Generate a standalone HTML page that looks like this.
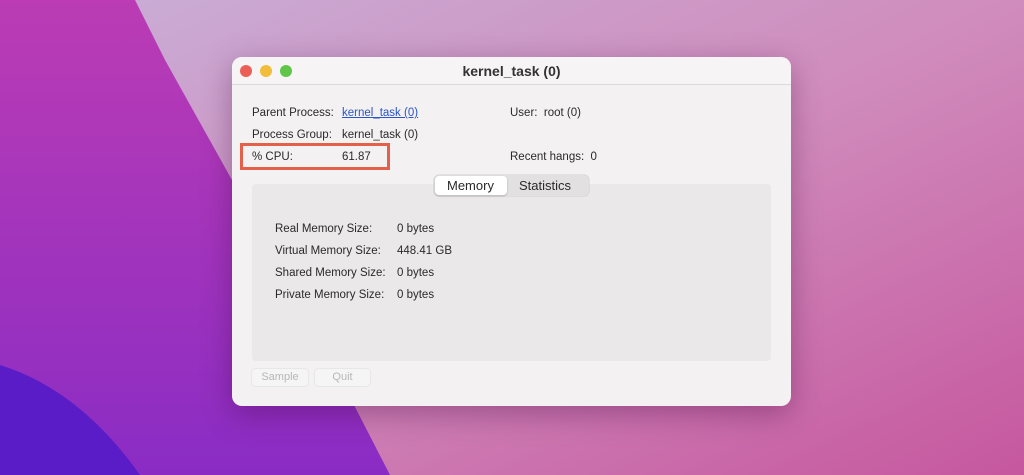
<!DOCTYPE html>
<html><head><style>
body{margin:0;width:1024px;height:475px;overflow:hidden;position:relative;font-family:"Liberation Sans",sans-serif;}
svg.bg{position:absolute;left:0;top:0}
.win{position:absolute;left:232px;top:57px;width:559px;height:349px;background:#f3f1f1;border-radius:10px;box-shadow:0 8px 30px rgba(60,0,60,.35);overflow:hidden}
.tb{height:27px;border-bottom:1px solid #dcdada;background:#f6f4f4;position:relative}
.dot{position:absolute;top:8px;width:12px;height:12px;border-radius:50%}
.title{position:absolute;left:0;right:0;top:6px;text-align:center;font-size:14px;font-weight:bold;color:#333}
.t{position:absolute;font-size:11.5px;color:#2a2a2a;white-space:nowrap}
a{color:#2a55c8;text-decoration:underline}
.box{position:absolute;left:8px;top:86px;width:150px;height:27px;border:3px solid #e5604a;box-sizing:border-box}
.grp{position:absolute;left:20px;top:127px;width:519px;height:177px;background:#eae8e8;border-radius:4px}
.tabs{position:absolute;left:202px;top:118px;width:155px;height:21px;background:#e2e0e0;border-radius:5px;box-shadow:0 0 0 .5px #d0cece}
.tab1{position:absolute;left:1px;top:1px;width:72px;height:19px;background:#fff;border-radius:4px;box-shadow:0 1px 2px rgba(0,0,0,.2)}
.btn{position:absolute;top:312px;height:17px;background:#f6f5f5;border-radius:3px;box-shadow:0 0 0 .5px #ddd;font-size:11px;color:#b8b6b6;text-align:center;line-height:17px}
</style></head><body>
<svg class="bg" width="1024" height="475">
<defs>
<linearGradient id="g1" x1="0" y1="0" x2="1" y2="1"><stop offset="0" stop-color="#c8b0d8"/><stop offset=".5" stop-color="#d08cbc"/><stop offset="1" stop-color="#c6579f"/></linearGradient>
<linearGradient id="g2" x1="0" y1="0" x2="0" y2="1"><stop offset="0" stop-color="#bb3cb4"/><stop offset="1" stop-color="#8a2cc4"/></linearGradient>
</defs>
<rect width="1024" height="475" fill="url(#g1)"/>
<path d="M0 0 L135 0 L165 60 L232 180 L300 300 L390 475 L0 475Z" fill="url(#g2)"/>
<path d="M0 365 Q80 390 140 475 L0 475Z" fill="#5a1cc6"/>
</svg>
<div class="win">
<div class="tb">
<div class="dot" style="left:8px;background:#ec5f56"></div>
<div class="dot" style="left:28px;background:#f3bd3c"></div>
<div class="dot" style="left:48px;background:#5fc64a"></div>
<div class="title">kernel_task (0)</div>
</div>
<div class="t" style="left:20px;top:50px">Parent Process:</div>
<div class="t" style="left:110px;top:50px"><a>kernel_task (0)</a></div>
<div class="t" style="left:278px;top:50px">User:&nbsp; root (0)</div>
<div class="t" style="left:20px;top:72px">Process Group:</div>
<div class="t" style="left:110px;top:72px">kernel_task (0)</div>
<div class="t" style="left:20px;top:94px">% CPU:</div>
<div class="t" style="left:110px;top:94px">61.87</div>
<div class="t" style="left:278px;top:94px">Recent hangs:&nbsp; 0</div>
<div class="box"></div>
<div class="grp"></div>
<div class="tabs"><div class="tab1"></div>
<div class="t" style="left:13px;top:3px;font-size:13px">Memory</div>
<div class="t" style="left:85px;top:3px;font-size:13px">Statistics</div></div>
<div class="t" style="left:43px;top:166px">Real Memory Size:</div><div class="t" style="left:165px;top:166px">0 bytes</div>
<div class="t" style="left:43px;top:188px">Virtual Memory Size:</div><div class="t" style="left:165px;top:188px">448.41 GB</div>
<div class="t" style="left:43px;top:210px">Shared Memory Size:</div><div class="t" style="left:165px;top:210px">0 bytes</div>
<div class="t" style="left:43px;top:232px">Private Memory Size:</div><div class="t" style="left:165px;top:232px">0 bytes</div>
<div class="btn" style="left:20px;width:56px">Sample</div>
<div class="btn" style="left:83px;width:55px">Quit</div>
</div>
</body></html>
